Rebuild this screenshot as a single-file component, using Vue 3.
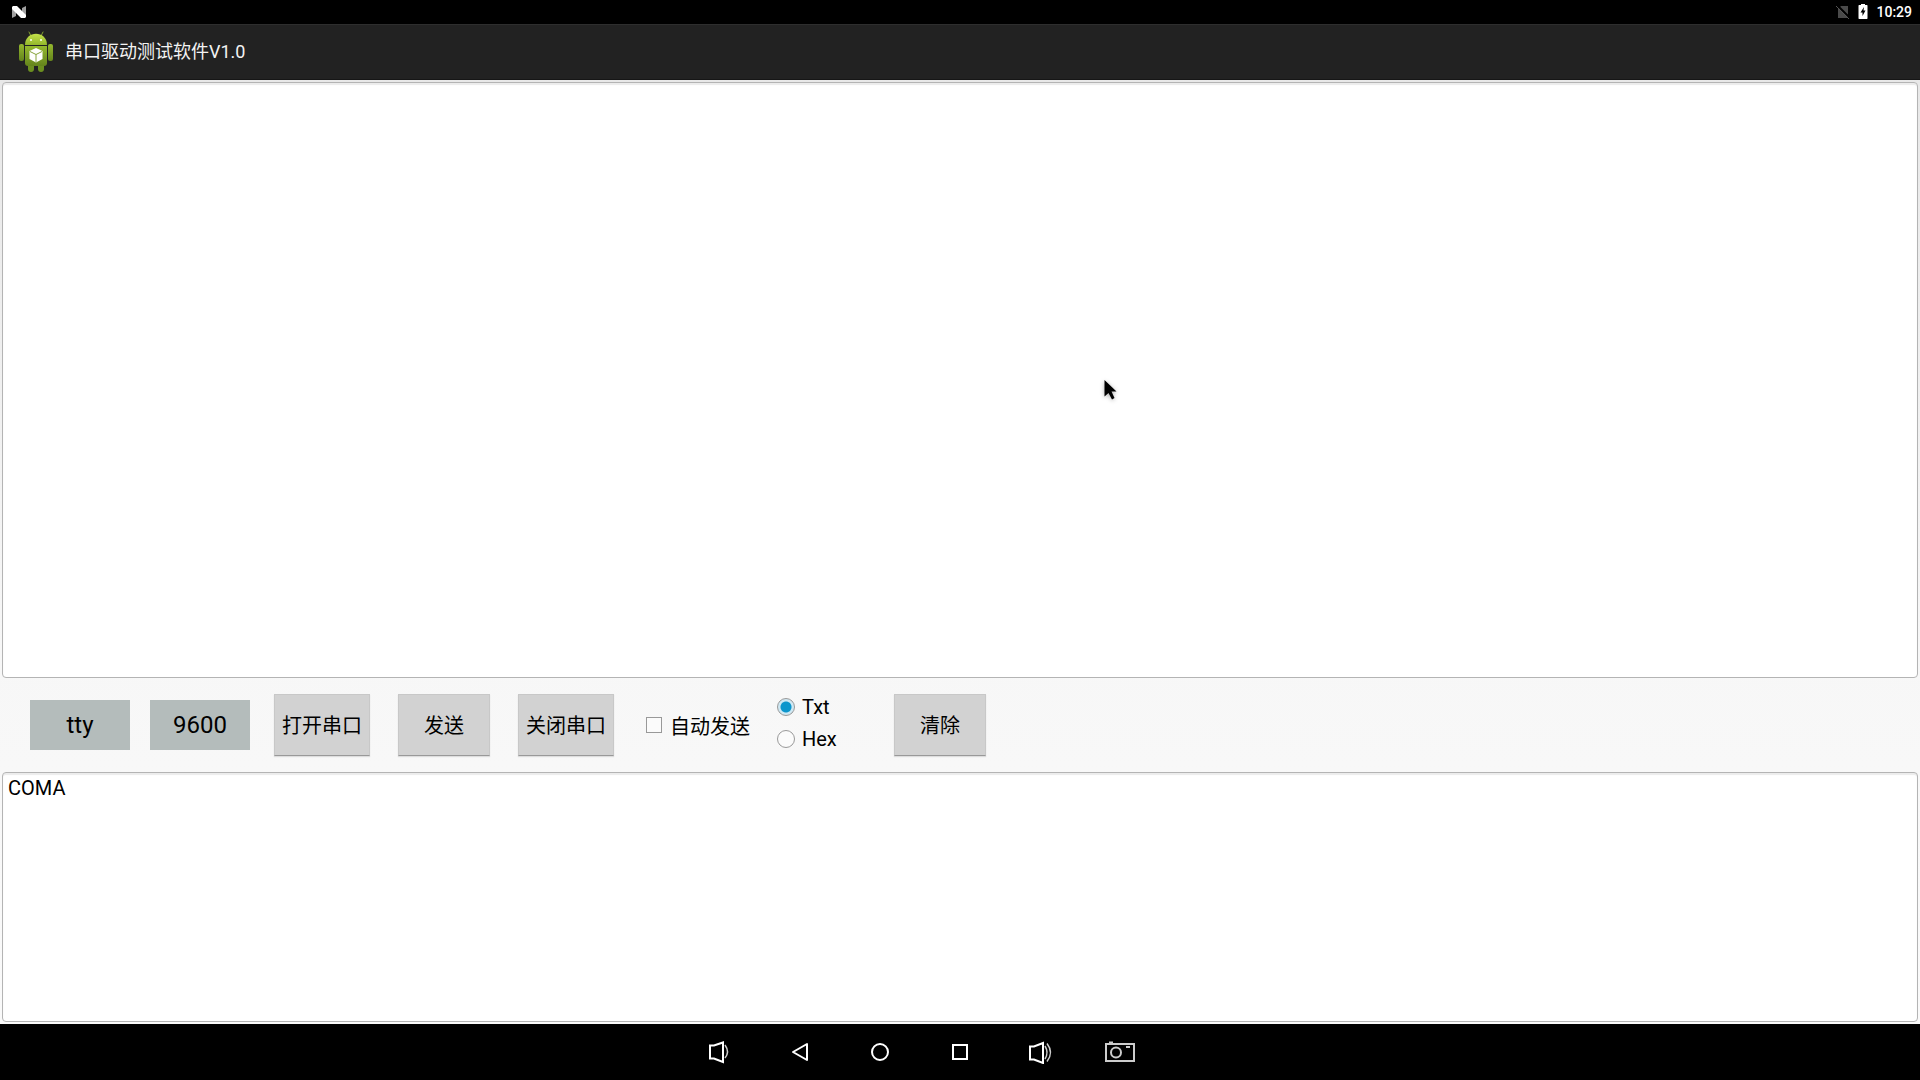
<template>
<div class="screen">
    <header class="status">
        <svg class="status__n" width="14" height="12" viewBox="0 0 14 12">
            <path d="M0 1 H4 V10 L0 12 Z M10 2 L14 0 V11 H10 Z" fill="#a0a0a0"/>
            <path d="M1 0 H5 L14 9 V11 L13 12 H9 L0 3 V1 Z" fill="#fff"/>
        </svg>
        <div class="status__right">
            <svg width="14" height="14" viewBox="0 0 14 14">
                <path d="M5 1 H12 V13 H2 V4 Z" fill="#4a4a4a"/>
                <path d="M1 0 L14 13" stroke="#000" stroke-width="2"/>
                <path d="M0 1 L13 14" stroke="#555" stroke-width="1"/>
            </svg>
            <svg class="status__battery" width="10" height="16" viewBox="0 0 10 16">
                <path d="M3 0 H7 V1 H9 Q9.500 1 9.500 2 V14 Q9.500 15 9 15 H1 Q0.500 15 0.500 14 V2 Q0.500 1 1 1 H3 Z" fill="#fff"/>
                <path d="M6 3 L2.500 8.500 H4.500 V12 L7.500 6.500 H5.500 Z" fill="#000"/>
            </svg>
            <span class="status__time">10:29</span>
        </div>
    </header>

    <div class="title">
        <svg width="36" height="42" viewBox="0 0 36 42">
            <defs>
                <linearGradient id="head" x1="0" y1="0" x2="0" y2="1">
                    <stop offset="0" stop-color="#c3e04a"/>
                    <stop offset="1" stop-color="#94b82c"/>
                </linearGradient>
                <linearGradient id="body" x1="0" y1="0" x2="0" y2="1">
                    <stop offset="0" stop-color="#94b82e"/>
                    <stop offset="1" stop-color="#64841c"/>
                </linearGradient>
            </defs>
            <path d="M11 1 L13 5 M25 1 L23 5" stroke="#84a230" stroke-width="1" stroke-linecap="round"/>
            <path d="M7 14 C7 -1 29 -1 29 14 Z" fill="url(#head)"/>
            <circle cx="13" cy="9" r="1" fill="#fff"/>
            <circle cx="23" cy="9" r="1" fill="#fff"/>
            <rect x="1" y="13" width="5" height="17" rx="2" fill="url(#body)"/>
            <rect x="30" y="13" width="5" height="17" rx="2" fill="url(#body)"/>
            <rect x="10" y="30" width="6" height="11" rx="3" fill="#6c8f20"/>
            <rect x="20" y="30" width="6" height="11" rx="3" fill="#6c8f20"/>
            <path d="M7 15 H29 V32 Q29 35 26 35 H10 Q7 35 7 32 Z" fill="url(#body)"/>
            <path d="M18 17 L24.500 20 V28 L18 31.500 L11.500 28 V20 Z" fill="#fff"/>
            <path d="M12 20.500 L18 23.500 L24 20.500 M18 23.500 V31" stroke="#86a33a" stroke-width="1" fill="none"/>
        </svg>
        <h1>串口驱动测试软件V1.0</h1>
    </div>

    <main class="content">
        <textarea class="box box--received" v-model="received" aria-label="接收" spellcheck="false"></textarea>

        <div class="tools">
            <input class="field" type="text" v-model="port" aria-label="串口">
            <input class="field" type="text" v-model="baud" aria-label="波特率">
            <button class="btn btn--wide btn--open">打开串口</button>
            <button class="btn">发送</button>
            <button class="btn btn--wide">关闭串口</button>
            <label class="auto"><input type="checkbox" v-model="autoSend">自动发送</label>
            <div class="modes">
                <label v-for="m in modes" :key="m"><input type="radio" name="mode" :value="m" v-model="mode">{{ m }}</label>
            </div>
            <button class="btn" @click="clear">清除</button>
        </div>

        <textarea class="box box--send" v-model="message" aria-label="发送内容" spellcheck="false"></textarea>
    </main>

    <nav class="nav">
        <button aria-label="音量减">
            <svg width="32" height="24" viewBox="0 0 32 24" fill="none" stroke="#fff">
                <path d="M6 5.500 L10 5.500 L19 2.500 V22 L10 18.500 H6 Z" stroke-width="2"/>
                <path d="M21 5 Q26 12 21 18" stroke="#ccc" stroke-width="1.500"/>
            </svg>
        </button>
        <button aria-label="返回">
            <svg width="32" height="24" viewBox="0 0 32 24" fill="none" stroke="#fff">
                <path d="M23 4 V20 L9 12 Z" stroke-width="2" stroke-linejoin="round"/>
            </svg>
        </button>
        <button aria-label="主页">
            <svg width="32" height="24" viewBox="0 0 32 24" fill="none" stroke="#fff">
                <circle cx="16" cy="12" r="8" stroke-width="2"/>
            </svg>
        </button>
        <button aria-label="最近">
            <svg width="32" height="24" viewBox="0 0 32 24" fill="none" stroke="#fff">
                <rect x="9" y="5" width="14" height="14" stroke-width="2"/>
            </svg>
        </button>
        <button aria-label="音量加">
            <svg width="32" height="24" viewBox="0 0 32 24" fill="none" stroke="#fff">
                <path d="M6 6.500 L10 6.500 L19 3 V23 L10 19.500 H6 Z" stroke-width="2"/>
                <path d="M21 6 Q25 12.500 21 19 M23 3.500 Q30 12.500 23 21.500" stroke="#ccc" stroke-width="1.500"/>
            </svg>
        </button>
        <button aria-label="截屏">
            <svg width="32" height="24" viewBox="0 0 32 24" fill="none" stroke="#ccc">
                <rect x="2" y="4" width="28" height="17" stroke-width="2"/>
                <circle cx="12" cy="12.500" r="5" stroke-width="2"/>
                <path d="M5 2.500 H9 M22 7 H26" stroke-width="2"/>
            </svg>
        </button>
    </nav>

    <svg class="pointer" width="22" height="28" viewBox="0 0 22 28">
        <path d="M3.500 3 V19.500 L7.500 16 L11 22.500 L13.500 21 L10.500 14.500 H15.500 Z" fill="#000"/>
    </svg>
</div>
</template>

<script setup>
import { ref } from 'vue'
const received = ref('')
const message = ref('COMA')
const port = ref('tty')
const baud = ref('9600')
const autoSend = ref(false)
const modes = ['Txt', 'Hex']
const mode = ref('Txt')
function clear(){
    received.value = ''
}
</script>

<style>
body{
    margin: 0;
}
</style>

<style scoped>
*{
    box-sizing: border-box;
}
.screen{
    position: relative;
    display: flex;
    flex-direction: column;
    min-height: 100vh;
    font-family: Roboto, "Noto Sans CJK SC", sans-serif;
    font-size: 20px;
    color: #000;
}
svg{
    display: block;
}
input, textarea, button{
    font: inherit;
    color: inherit;
    margin: 0;
    outline: none;
}

.status{
    display: flex;
    align-items: center;
    justify-content: space-between;
    height: 24px;
    padding: 0 8px 0 12px;
    background: #000;
}
.status__right{
    display: flex;
    align-items: center;
}
.status__battery{
    margin: 0 8px;
}
.status__time{
    font-size: 14px;
    font-weight: 500;
    line-height: 24px;
    color: #fff;
}

.title{
    display: flex;
    align-items: center;
    gap: 11px;
    height: 56px;
    padding: 0 18px;
    background: #222;
    border-top: 1px solid #2e2e2e;
    border-bottom: 1px solid #161616;
}
.title h1{
    margin: 0;
    font-size: 18px;
    font-weight: 400;
    line-height: 24px;
    color: #f3f3f3;
}

.content{
    flex: 1;
    display: flex;
    flex-direction: column;
    padding: 2px;
    background: linear-gradient(#e8e8e8, #f7f7f7 60%, #fafafa);
}
.box{
    display: block;
    width: 100%;
    padding: 3px 5px;
    line-height: 24px;
    border: 1px solid #b4b4b4;
    border-radius: 4px;
    background: #fff;
    box-shadow: inset 0 2px 1px #ececec;
    resize: none;
}
.box--received{
    flex: 1;
}
.box--send{
    height: 250px;
}

.tools{
    display: flex;
    align-items: center;
    height: 94px;
    padding: 0 28px;
}
.field{
    width: 100px;
    height: 50px;
    margin-right: 20px;
    padding: 0;
    border: none;
    background: #b4bcbb;
    font-size: 24px;
    text-align: center;
}
.btn{
    width: 92px;
    height: 62px;
    padding: 0 0 2px;
    border: 1px solid #c8c8c8;
    border-bottom: 1px solid #999;
    background: #d2d2d2;
    box-shadow: 0 1px 1px #ddd;
}
.btn--wide{
    width: 96px;
    margin-right: 28px;
}
.btn--open{
    margin-left: 4px;
}
.btn--wide + .btn{
    margin-right: 28px;
}
.auto{
    display: flex;
    align-items: center;
    gap: 8px;
    margin-left: 4px;
}
.auto input{
    appearance: none;
    width: 16px;
    height: 16px;
    border: 1px solid #999;
    background: #fbfbfb;
}
.auto input:checked{
    background: #0c96cc;
}
.modes{
    width: 117px;
    margin-left: 27px;
    padding-bottom: 5px;
}
.modes label{
    display: flex;
    align-items: center;
    gap: 7px;
    height: 32px;
}
.modes input{
    appearance: none;
    width: 18px;
    height: 18px;
    border: 1px solid #999;
    border-radius: 50%;
    background: #fbfbfb;
}
.modes input:checked{
    background: radial-gradient(circle, #0c96cc 5px, #cfe8f3 6px);
}

.nav{
    display: flex;
    justify-content: center;
    height: 56px;
    padding-right: 80px;
    background: #000;
}
.nav button{
    display: flex;
    align-items: center;
    justify-content: center;
    width: 80px;
    padding: 0;
    border: none;
    background: none;
}

/* mouse pointer floats over the receive box */
.pointer{
    position: absolute;
    left: 1101px;
    top: 377px;
    filter: drop-shadow(0 1px 2px #aaa);
    pointer-events: none;
}
</style>
